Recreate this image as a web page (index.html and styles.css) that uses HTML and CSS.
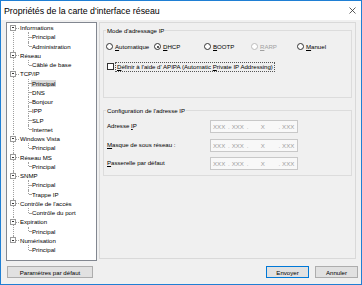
FILE: index.html
```html
<!DOCTYPE html>
<html lang="fr">
<head>
<meta charset="UTF-8">
<title>Propriétés de la carte d'interface réseau</title>
<link rel="stylesheet" href="styles.css">
</head>
<body>
<div class="window">
	<div class="titlebar">
		<span class="title">Propriétés de la carte d'interface réseau</span>
		<svg class="close" width="7" height="7" viewBox="0 0 7 7"><path d="M0.5 0.5L6.5 6.5M6.5 0.5L0.5 6.5" stroke="#333" stroke-width="0.8"/></svg>
	</div>
	<div class="body">
		<div class="main">
			<ul class="tree">
				<li class="root"><div class="row"><span class="toggle"></span><span class="label">Informations</span></div>
					<ul class="children">
						<li><span class="label">Principal</span></li>
						<li><span class="label">Administration</span></li>
					</ul>
				</li>
				<li class="root"><div class="row"><span class="toggle"></span><span class="label">Réseau</span></div>
					<ul class="children">
						<li><span class="label">Câblé de base</span></li>
					</ul>
				</li>
				<li class="root"><div class="row"><span class="toggle"></span><span class="label">TCP/IP</span></div>
					<ul class="children">
						<li><span class="label sel">Principal</span></li>
						<li><span class="label">DNS</span></li>
						<li><span class="label">Bonjour</span></li>
						<li><span class="label">IPP</span></li>
						<li><span class="label">SLP</span></li>
						<li><span class="label">Internet</span></li>
					</ul>
				</li>
				<li class="root"><div class="row"><span class="toggle"></span><span class="label">Windows Vista</span></div>
					<ul class="children">
						<li><span class="label">Principal</span></li>
					</ul>
				</li>
				<li class="root"><div class="row"><span class="toggle"></span><span class="label">Réseau MS</span></div>
					<ul class="children">
						<li><span class="label">Principal</span></li>
					</ul>
				</li>
				<li class="root"><div class="row"><span class="toggle"></span><span class="label">SNMP</span></div>
					<ul class="children">
						<li><span class="label">Principal</span></li>
						<li><span class="label">Trappe IP</span></li>
					</ul>
				</li>
				<li class="root"><div class="row"><span class="toggle"></span><span class="label">Contrôle de l'accès</span></div>
					<ul class="children">
						<li><span class="label">Contrôle du port</span></li>
					</ul>
				</li>
				<li class="root"><div class="row"><span class="toggle"></span><span class="label">Expiration</span></div>
					<ul class="children">
						<li><span class="label">Principal</span></li>
					</ul>
				</li>
				<li class="root"><div class="row"><span class="toggle"></span><span class="label">Numérisation</span></div>
					<ul class="children">
						<li><span class="label">Principal</span></li>
					</ul>
				</li>
			</ul>

			<div class="panel">
				<div class="group mode">
					<span class="legend">Mode d'adressage IP</span>
					<div class="radios">
						<label class="radio w-auto"><span class="dot"></span><u>A</u>utomatique</label>
						<label class="radio w-dhcp"><span class="dot on"></span><u>D</u>HCP</label>
						<label class="radio w-bootp"><span class="dot"></span><u>B</u>OOTP</label>
						<label class="radio w-rarp off"><span class="dot"></span><u>R</u>ARP</label>
						<label class="radio"><span class="dot"></span><u>M</u>anuel</label>
					</div>
					<label class="check"><span class="box"></span><span class="focus"><u>D</u>éfinir à l'aide d' APIPA (Automatic <u>P</u>rivate IP Addressing)</span></label>
				</div>

				<div class="group config">
					<span class="legend">Configuration de l'adresse IP</span>
					<div class="field">
						<span class="flabel">Adresse <u>I</u>P</span>
						<span class="ipbox"><span class="o1">XXX</span>.<span class="o2">XXX</span>.<span class="o3">X</span>.<span class="o4">XXX</span></span>
					</div>
					<div class="field">
						<span class="flabel"><u>M</u>asque de sous réseau :</span>
						<span class="ipbox"><span class="o1">XXX</span>.<span class="o2">XXX</span>.<span class="o3">X</span>.<span class="o4">XXX</span></span>
					</div>
					<div class="field">
						<span class="flabel"><u>P</u>asserelle par défaut</span>
						<span class="ipbox"><span class="o1">XXX</span>.<span class="o2">XXX</span>.<span class="o3">X</span>.<span class="o4">XXX</span></span>
					</div>
				</div>
			</div>
		</div>

		<div class="footer">
			<button class="btn defaults">Paramètres par défaut</button>
			<span class="spacer"></span>
			<button class="btn primary">Envoyer</button>
			<button class="btn">Annuler</button>
		</div>
	</div>
</div>
</body>
</html>
```

FILE: styles.css
```css
html,
body {
	margin: 0;
	padding: 0;
	width: 362px;
	height: 285px;
	overflow: hidden;
}

* {
	box-sizing: border-box;
}

.window {
	width: 362px;
	height: 285px;
	border: 1px solid #1f7fd4;
	display: flex;
	flex-direction: column;
	font-family: "Liberation Sans", Arial, sans-serif;
	font-size: 6.1px;
	color: #000;
}

/* title bar */
.titlebar {
	height: 19px;
	background: #fff;
	display: flex;
	align-items: center;
	padding: 0 5px 0 3px;
}

.title {
	flex: 1 1 auto;
	font-size: 8.8px;
	color: #000;
}

.close {
	display: block;
}

/* dialog body */
.body {
	flex: 1 1 auto;
	background: #f0f0f0;
	display: flex;
	flex-direction: column;
	padding-top: 2px;
}

.main {
	display: flex;
	padding: 0 5px;
}

/* tree */
.tree {
	list-style: none;
	margin: 0;
	padding: 0;
	width: 91px;
	height: 239px;
	background: #fff;
	border: 1px solid #828790;
}

.tree ul {
	list-style: none;
	margin: 0;
	padding: 0;
}

.root {
	position: relative;
}

.root::before {
	content: "";
	position: absolute;
	left: 6px;
	top: 0;
	height: 100%;
	border-left: 1px dotted #a0a0a0;
}

.root:first-child::before {
	top: 4.6px;
}

.root:last-child::before {
	height: 4.6px;
}

.row {
	position: relative;
	height: 9.25px;
	line-height: 9.25px;
	padding-left: 12px;
	white-space: nowrap;
}

.row::after {
	content: "";
	position: absolute;
	left: 9px;
	top: 4.6px;
	width: 3px;
	border-top: 1px dotted #a0a0a0;
}

.toggle {
	position: absolute;
	left: 3px;
	top: 1.6px;
	width: 6px;
	height: 6px;
	background: #fff;
	border: 1px solid #9a9a9a;
	z-index: 1;
}

.toggle::after {
	content: "";
	position: absolute;
	left: 1px;
	top: 1.5px;
	width: 2px;
	height: 1px;
	background: #333;
}

.label {
	padding: 0 1px;
}

.label.sel {
	background: #d9d9d9;
}

.children li {
	position: relative;
	height: 9.25px;
	line-height: 9.25px;
	padding-left: 24px;
	white-space: nowrap;
}

.children li::before {
	content: "";
	position: absolute;
	left: 21px;
	top: 0;
	height: 100%;
	border-left: 1px dotted #a0a0a0;
}

.children li:last-child::before {
	height: 4.6px;
}

.children li::after {
	content: "";
	position: absolute;
	left: 22px;
	top: 4.6px;
	width: 2px;
	border-top: 1px dotted #a0a0a0;
}

/* right panel */
.panel {
	margin-left: 2px;
	width: 257px;
	height: 237px;
	border: 1px solid #d9d9d9;
	padding: 7px 3px 0 3px;
}

.group {
	position: relative;
	border: 1px solid #dcdcdc;
}

.legend {
	position: absolute;
	left: 2px;
	top: -4px;
	line-height: 7px;
	padding: 0 1px;
	background: #f0f0f0;
}

.mode {
	height: 68px;
	padding: 11px 0 0 2px;
}

.radios {
	display: flex;
	height: 9px;
	line-height: 9px;
}

.radio {
	display: flex;
	align-items: center;
	white-space: nowrap;
}

.w-auto {
	width: 48px;
}

.w-dhcp {
	width: 50px;
}

.w-bootp {
	width: 47px;
}

.w-rarp {
	width: 46px;
}

.dot {
	position: relative;
	width: 7px;
	height: 7px;
	border: 1px solid #333;
	border-radius: 50%;
	background: #fff;
	margin-right: 2px;
}

.dot.on::after {
	content: "";
	position: absolute;
	left: 1.5px;
	top: 1.5px;
	width: 2px;
	height: 2px;
	border-radius: 50%;
	background: #222;
}

.off {
	color: #a0a0a0;
}

.off .dot {
	border-color: #bcbcbc;
}

.check {
	display: flex;
	align-items: center;
	margin-top: 10px;
	margin-left: 1px;
	height: 11px;
}

.box {
	width: 7px;
	height: 7px;
	border: 1px solid #333;
	background: #fff;
	margin-right: 1px;
}

.focus {
	border: 1px dotted #555;
	padding: 0 1px;
	line-height: 8px;
}

.config {
	margin-top: 12px;
	height: 66px;
	padding: 9px 0 0 3px;
}

.field {
	display: flex;
	height: 18.5px;
}

.flabel {
	width: 103px;
	padding-top: 2px;
	line-height: 8px;
}

.ipbox {
	width: 88px;
	height: 13px;
	border: 1px solid #c8c8c8;
	background: #f8f8f8;
	color: #a0a0a0;
	display: flex;
	align-items: center;
	padding-left: 2px;
	white-space: nowrap;
}

.o1,
.o2 {
	width: 13px;
	margin-right: 2px;
}

.o2 {
	margin-left: 2px;
}

.o3 {
	width: 21px;
	text-align: center;
	margin: 0 5px 0 4px;
}

.o4 {
	margin-left: 2px;
}

/* buttons */
.footer {
	display: flex;
	padding: 5px 3px 0 6px;
	margin-top: auto;
	margin-bottom: 6px;
}

.spacer {
	flex: 1 1 auto;
}

.btn {
	height: 12px;
	padding: 0;
	font-family: "Liberation Sans", Arial, sans-serif;
	font-size: 6.1px;
	color: #000;
	background: #e1e1e1;
	border: 1px solid #adadad;
	width: 43px;
	margin-left: 6px;
}

.btn.defaults {
	width: 86px;
	margin-left: 0;
}

.btn.primary {
	border-color: #0078d7;
}
```
